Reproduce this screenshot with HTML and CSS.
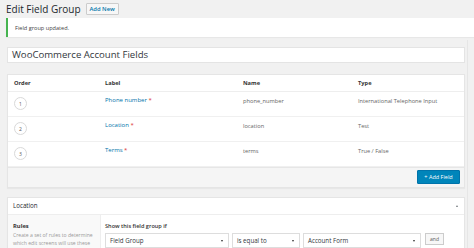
FILE: index.html
```html
<!DOCTYPE html>
<html lang="en">
<head>
  <meta charset="UTF-8" />
  <meta name="viewport" content="width=device-width, initial-scale=1.0" />
  <title>Edit Field Group</title>
  <link rel="stylesheet" href="styles.css">
</head>
<body>
  <div class="wrap">
    <div class="page-head">
      <h1>Edit Field Group</h1>
      <a class="page-title-action" href="#">Add New</a>
    </div>

    <div class="notice">
      <p>Field group updated.</p>
    </div>

    <div class="post-body">
      <div class="title-field">WooCommerce Account Fields</div>

      <div class="postbox">
        <table class="field-list">
          <thead>
            <tr>
              <th class="col-order">Order</th>
              <th class="col-label">Label</th>
              <th class="col-name">Name</th>
              <th class="col-type">Type</th>
            </tr>
          </thead>
          <tbody>
            <tr>
              <td class="col-order"><span class="handle">1</span></td>
              <td class="col-label"><a href="#">Phone number</a> <span class="req">*</span></td>
              <td class="col-name">phone_number</td>
              <td class="col-type">International Telephone Input</td>
            </tr>
            <tr>
              <td class="col-order"><span class="handle">2</span></td>
              <td class="col-label"><a href="#">Location</a> <span class="req">*</span></td>
              <td class="col-name">location</td>
              <td class="col-type">Test</td>
            </tr>
            <tr>
              <td class="col-order"><span class="handle">3</span></td>
              <td class="col-label"><a href="#">Terms</a> <span class="req">*</span></td>
              <td class="col-name">terms</td>
              <td class="col-type">True / False</td>
            </tr>
          </tbody>
        </table>
        <div class="fields-footer">
          <a class="button-primary" href="#">+ Add Field</a>
        </div>
      </div>

      <div class="postbox location-box">
        <div class="postbox-head">
          <span>Location</span>
          <span class="toggle"></span>
        </div>
        <div class="rules">
          <div class="rules-info">
            <strong>Rules</strong>
            <p>Create a set of rules to determine which edit screens will use these advanced custom fields</p>
          </div>
          <div class="rules-main">
            <p class="rules-title">Show this field group if</p>
            <div class="rule-row">
              <div class="select sel-param">Field Group</div>
              <div class="select sel-op">is equal to</div>
              <div class="select sel-value">Account Form</div>
              <span class="btn-and">and</span>
            </div>
          </div>
        </div>
      </div>
    </div>
  </div>
</body>
</html>
```

FILE: styles.css
```css
* {
  box-sizing: border-box;
}

body {
  margin: 0;
  background: #f1f1f1;
  font-family: "Open Sans", Arial, sans-serif;
  color: #444;
  overflow: hidden;
}

.wrap {
  padding-left: 6px;
  position: relative;
}

/* sidebar edge peeking at the right */
.wrap::after {
  content: "";
  position: absolute;
  top: 40px;
  bottom: 0;
  left: 467px;
  width: 1px;
  background: #e6e6e6;
}

.page-head {
  display: flex;
  align-items: center;
  height: 18px;
}

h1 {
  margin: 0;
  font-size: 10px;
  font-weight: 400;
  color: #23282d;
  line-height: 14px;
}

.page-title-action {
  margin-left: 5px;
  padding: 0 3px;
  height: 12px;
  line-height: 10px;
  border: 1px solid #ccc;
  border-radius: 1px;
  background: #f7f7f7;
  color: #0073aa;
  font-size: 5.8px;
  font-weight: 600;
  text-decoration: none;
}

.notice {
  height: 19px;
  background: #fff;
  border-left: 2px solid #46b450;
  box-shadow: 0 1px 1px rgba(0, 0, 0, 0.04);
  display: flex;
  align-items: center;
  padding-left: 7px;
}

.notice p {
  margin: 0;
  font-size: 5.6px;
  color: #444;
}

.post-body {
  margin-left: 1px;
  width: 458px;
}

.title-field {
  margin-top: 10px;
  height: 16px;
  background: #fff;
  border: 1px solid #e4e4e4;
  padding-left: 4px;
  font-size: 9.6px;
  line-height: 14px;
  color: #32373c;
}

.postbox {
  margin-top: 11px;
  background: #fff;
  border: 1px solid #e5e5e5;
  box-shadow: 0 1px 1px rgba(0, 0, 0, 0.04);
}

.location-box {
  margin-top: 9px;
}

.field-list {
  width: 100%;
  border-collapse: collapse;
  table-layout: fixed;
  font-size: 5.7px;
}

.field-list th {
  height: 16px;
  text-align: left;
  font-weight: 700;
  color: #333;
  padding: 0 0 0 6px;
  border-bottom: 1px solid #eee;
}

.field-list td {
  height: 25px;
  padding: 5px 0 0 6px;
  vertical-align: top;
  border-bottom: 1px solid #f0f0f0;
  color: #666;
}

.field-list td.col-order {
  vertical-align: middle;
  padding-top: 0;
}

.col-order {
  width: 91px;
}

.col-label {
  width: 138px;
}

.col-name {
  width: 115px;
}

.field-list td.col-label {
  padding-top: 4px;
  font-size: 6px;
}

.field-list a {
  color: #0073aa;
  text-decoration: none;
}

.req {
  color: #dc3232;
}

.handle {
  display: flex;
  align-items: center;
  justify-content: center;
  width: 13px;
  height: 13px;
  border: 1px solid #d9d9d9;
  border-radius: 50%;
  font-size: 5px;
  color: #555;
  background: #fff;
}

.fields-footer {
  height: 20px;
  background: #f5f5f5;
  border-top: 1px solid #e6e6e6;
  display: flex;
  justify-content: flex-end;
  align-items: center;
  padding-right: 4px;
}

.button-primary {
  display: inline-block;
  height: 14px;
  width: 43px;
  line-height: 12px;
  text-align: center;
  background: #0085ba;
  border: 1px solid #0073aa;
  border-radius: 1px;
  color: #fff;
  font-size: 5.5px;
  text-decoration: none;
}

.postbox-head {
  height: 17px;
  display: flex;
  align-items: center;
  justify-content: space-between;
  padding: 0 6px 0 5px;
  border-bottom: 1px solid #eee;
  font-size: 6.2px;
  color: #23282d;
}

.toggle {
  width: 0;
  height: 0;
  border-left: 1.5px solid transparent;
  border-right: 1.5px solid transparent;
  border-bottom: 2px solid #72777c;
}

.rules {
  display: flex;
  min-height: 60px;
}

.rules-info {
  width: 93px;
  background: #f9f9f9;
  border-right: 1px solid #eee;
  padding: 7px 6px 0 5px;
}

.rules-info strong {
  display: block;
  font-size: 5.8px;
  color: #333;
  line-height: 8px;
}

.rules-info p {
  margin: 1px 0 0;
  font-size: 5.1px;
  line-height: 8.5px;
  color: #999;
}

.rules-main {
  flex: 1;
  padding: 7px 0 0 4px;
}

.rules-title {
  margin: 0;
  font-size: 5.6px;
  font-weight: 600;
  color: #333;
  line-height: 8px;
}

.rule-row {
  display: flex;
  align-items: flex-start;
  gap: 3px;
  margin-top: 3px;
}

.select {
  position: relative;
  height: 15px;
  border: 1px solid #ddd;
  background: #fff;
  padding-left: 4px;
  font-size: 6.2px;
  line-height: 13px;
  color: #32373c;
}

.select::after {
  content: "";
  position: absolute;
  right: 5px;
  top: 6px;
  border-left: 1.5px solid transparent;
  border-right: 1.5px solid transparent;
  border-top: 2px solid #333;
}

.sel-param {
  width: 124px;
}

.sel-op {
  width: 68px;
}

.sel-value {
  width: 118px;
}

.btn-and {
  margin-left: 1px;
  height: 12px;
  width: 19px;
  line-height: 10px;
  text-align: center;
  border: 1px solid #ccc;
  background: #f7f7f7;
  font-size: 5px;
  color: #555;
}
```
